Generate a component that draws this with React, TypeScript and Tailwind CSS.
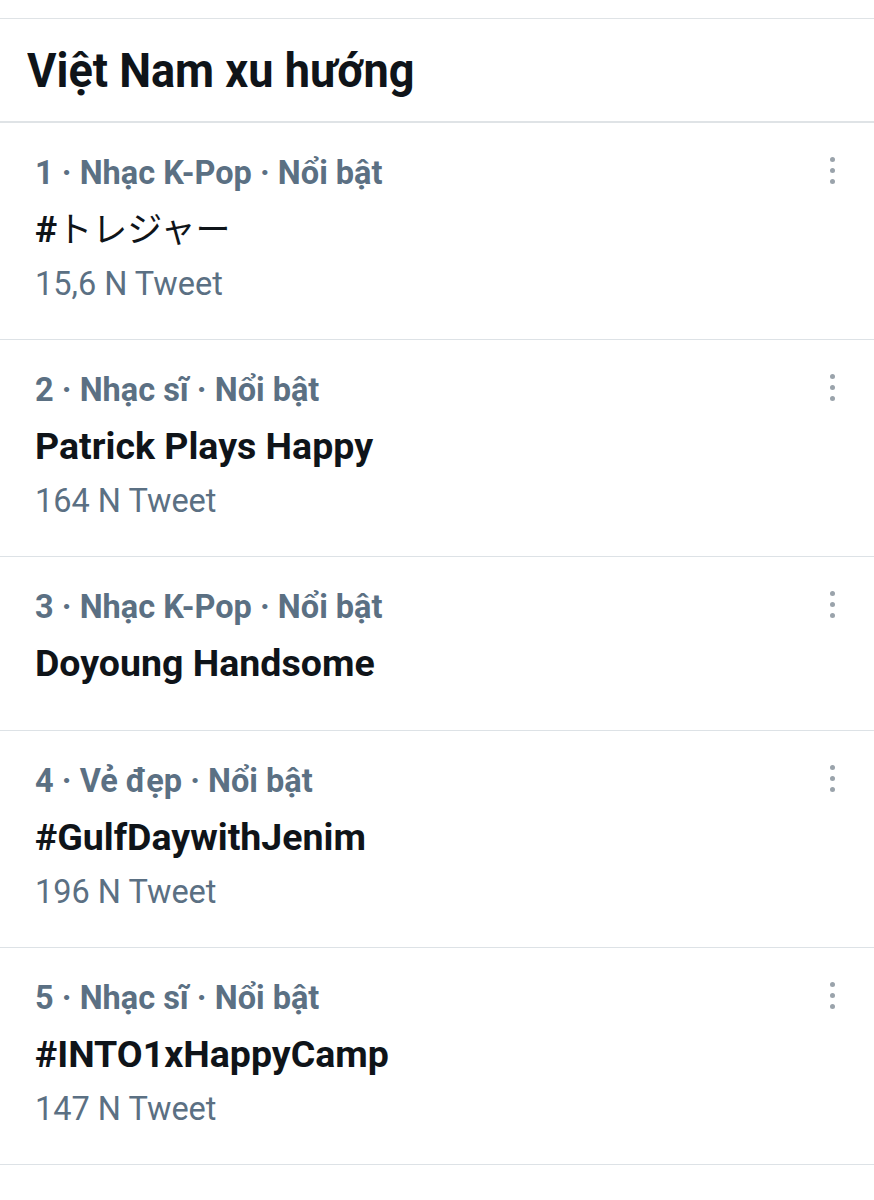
import React from "react";

type Trend = {
  rank: number;
  category: string;
  title: React.ReactNode;
  tweets?: string;
};

const trends: Trend[] = [
  {
    rank: 1,
    category: "Nhạc K-Pop",
    title: (
      <>
        #<span className="font-normal text-[35px]">トレジャー</span>
      </>
    ),
    tweets: "15,6 N Tweet",
  },
  { rank: 2, category: "Nhạc sĩ", title: "Patrick Plays Happy", tweets: "164 N Tweet" },
  { rank: 3, category: "Nhạc K-Pop", title: "Doyoung Handsome" },
  { rank: 4, category: "Vẻ đẹp", title: "#GulfDaywithJenim", tweets: "196 N Tweet" },
  { rank: 5, category: "Nhạc sĩ", title: "#INTO1xHappyCamp", tweets: "147 N Tweet" },
];

const MoreDots = () => (
  <div className="flex flex-col items-center gap-[6px] mt-[12px]">
    <span className="block w-[5px] h-[5px] rounded-full bg-[#9aa3ab]" />
    <span className="block w-[5px] h-[5px] rounded-full bg-[#9aa3ab]" />
    <span className="block w-[5px] h-[5px] rounded-full bg-[#9aa3ab]" />
  </div>
);

const TrendRow = ({ trend }: { trend: Trend }) => {
  return (
    <div
      className={`flex justify-between pl-[35px] pr-[39px] pt-[22px] border-b border-[#dde2e6] ${
        trend.tweets ? "pb-[28px]" : "pb-[39px]"
      }`}
    >
      <div className="flex flex-col">
        <div className="h-[56px] leading-[56px] text-[32.5px] font-bold text-[#5b7083] whitespace-nowrap">
          {trend.rank} · {trend.category} · Nổi bật
        </div>
        <div className="h-[56px] leading-[56px] text-[37.5px] font-bold text-[#0f1419] whitespace-nowrap">
          {trend.title}
        </div>
        {trend.tweets && (
          <div className="h-[54px] leading-[54px] text-[32.5px] text-[#5b7083] whitespace-nowrap">
            {trend.tweets}
          </div>
        )}
      </div>
      <MoreDots />
    </div>
  );
};

export default function App() {
  return (
    <div className="w-[874px] min-h-[1200px] bg-white font-['Roboto','Noto_Sans_CJK_JP',sans-serif] overflow-hidden">
      <div className="h-[19px] border-b border-[#dfe3e6]" />
      <div className="h-[104px] pl-[27px] pt-[27px] border-b-[2px] border-[#dfe3e6]">
        <h2 className="origin-left scale-x-[0.92] leading-[49px] text-[49px] font-bold text-[#0f1419] whitespace-nowrap">
          Việt Nam xu hướng
        </h2>
      </div>
      {trends.map((t) => (
        <TrendRow key={t.rank} trend={t} />
      ))}
      <div className="h-[40px]" />
    </div>
  );
}
